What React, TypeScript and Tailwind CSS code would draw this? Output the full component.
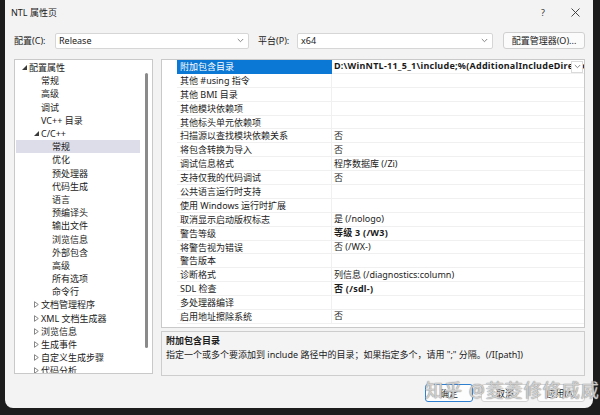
import React from "react";

type TreeItem = { label: string; level: 0 | 1 | 2; kind: "open" | "closed" | "leaf"; selected?: boolean };

const tree: TreeItem[] = [
  { label: "配置属性", level: 0, kind: "open" },
  { label: "常规", level: 1, kind: "leaf" },
  { label: "高级", level: 1, kind: "leaf" },
  { label: "调试", level: 1, kind: "leaf" },
  { label: "VC++ 目录", level: 1, kind: "leaf" },
  { label: "C/C++", level: 1, kind: "open" },
  { label: "常规", level: 2, kind: "leaf", selected: true },
  { label: "优化", level: 2, kind: "leaf" },
  { label: "预处理器", level: 2, kind: "leaf" },
  { label: "代码生成", level: 2, kind: "leaf" },
  { label: "语言", level: 2, kind: "leaf" },
  { label: "预编译头", level: 2, kind: "leaf" },
  { label: "输出文件", level: 2, kind: "leaf" },
  { label: "浏览信息", level: 2, kind: "leaf" },
  { label: "外部包含", level: 2, kind: "leaf" },
  { label: "高级", level: 2, kind: "leaf" },
  { label: "所有选项", level: 2, kind: "leaf" },
  { label: "命令行", level: 2, kind: "leaf" },
  { label: "文档管理程序", level: 1, kind: "closed" },
  { label: "XML 文档生成器", level: 1, kind: "closed" },
  { label: "浏览信息", level: 1, kind: "closed" },
  { label: "生成事件", level: 1, kind: "closed" },
  { label: "自定义生成步骤", level: 1, kind: "closed" },
  { label: "代码分析", level: 1, kind: "closed" },
];

type Prop = { name: string; value?: string; bold?: boolean };

const props: Prop[] = [
  { name: "附加包含目录", value: "D:\\WinNTL-11_5_1\\include;%(AdditionalIncludeDirectories)", bold: true },
  { name: "其他 #using 指令" },
  { name: "其他 BMI 目录" },
  { name: "其他模块依赖项" },
  { name: "其他标头单元依赖项" },
  { name: "扫描源以查找模块依赖关系", value: "否" },
  { name: "将包含转换为导入", value: "否" },
  { name: "调试信息格式", value: "程序数据库 (/Zi)" },
  { name: "支持仅我的代码调试", value: "否" },
  { name: "公共语言运行时支持" },
  { name: "使用 Windows 运行时扩展" },
  { name: "取消显示启动版权标志", value: "是 (/nologo)" },
  { name: "警告等级", value: "等级 3 (/W3)", bold: true },
  { name: "将警告视为错误", value: "否 (/WX-)" },
  { name: "警告版本" },
  { name: "诊断格式", value: "列信息 (/diagnostics:column)" },
  { name: "SDL 检查", value: "否 (/sdl-)", bold: true },
  { name: "多处理器编译" },
  { name: "启用地址擦除系统", value: "否" },
];

const levelPad: Record<number, string> = {
  0: "pl-[6px]",
  1: "pl-[18px]",
  2: "pl-[29px]",
};

function Chevron() {
  return (
    <svg width="7" height="5" viewBox="0 0 7 5" className="shrink-0">
      <path d="M0.8 1 L3.5 3.7 L6.2 1" fill="none" stroke="#7a7a7a" strokeWidth="0.9" />
    </svg>
  );
}

function Combo({ text, w }: { text: string; w: string }) {
  return (
    <div className={`${w} shrink-0 h-[16px] bg-white border border-[#d6d6d6] rounded-[2px] flex items-center justify-between pl-[3px] pr-[4px]`}>
      <span>{text}</span>
      <Chevron />
    </div>
  );
}

function Arrow({ kind }: { kind: "open" | "closed" }) {
  if (kind === "open")
    return (
      <svg width="5" height="5" viewBox="0 0 5 5" className="shrink-0">
        <path d="M5 0 L5 5 L0 5 Z" fill="#3a3a3a" />
      </svg>
    );
  return (
    <svg width="5" height="7" viewBox="0 0 5 7" className="shrink-0">
      <path d="M0.5 0.7 L4.3 3.5 L0.5 6.3 Z" fill="none" stroke="#6a6a6a" strokeWidth="0.8" />
    </svg>
  );
}

function Button({ text, primary }: { text: string; primary?: boolean }) {
  return (
    <div
      className={`w-[48px] h-[18px] rounded-[3px] flex items-center justify-center bg-[#fdfdfd] border ${
        primary ? "border-[#2f7fd0]" : "border-[#d2d2d2]"
      }`}
    >
      {text}
    </div>
  );
}

export default function App() {
  return (
    <div className="w-[600px] h-[415px] bg-[#1c1c1c] flex overflow-hidden font-['Noto_Sans','Noto_Sans_CJK_SC',sans-serif] text-[9px] leading-none text-[#1b1b1b]">
      <div className="relative ml-[5px] w-[588px] h-[408px] bg-[#f3f3f3] rounded-b-[8px] flex flex-col">
        {/* Title bar */}
        <div className="h-[24px] flex items-center justify-between pl-[6px] pr-[13px]">
          <span className="pt-[1px]">NTL 属性页</span>
          <div className="flex items-center gap-[26px]">
            <span className="text-[#333]">?</span>
            <svg width="9" height="9" viewBox="0 0 9 9">
              <path d="M0.5 0.5 L8.5 8.5 M8.5 0.5 L0.5 8.5" stroke="#333" strokeWidth="0.9" />
            </svg>
          </div>
        </div>

        {/* Config row */}
        <div className="mt-[8px] h-[17px] flex items-center pl-[9px]">
          <span className="w-[41px] shrink-0">配置(C):</span>
          <Combo text="Release" w="w-[194px]" />
          <span className="ml-[9px] w-[39px] shrink-0">平台(P):</span>
          <Combo text="x64" w="w-[196px]" />
          <div className="ml-[10px] w-[82px] shrink-0 h-[17px] bg-[#fbfbfb] border border-[#d0d0d0] rounded-[3px] flex items-center justify-center">
            配置管理器(O)...
          </div>
        </div>

        {/* Main */}
        <div className="mt-[10px] flex pl-[9px] pr-[8px] gap-[8px]">
          {/* Tree */}
          <div className="w-[139px] shrink-0 h-[315px] bg-white border border-[#c9c9c9] flex overflow-hidden">
            <div className="flex-1 pt-[1px] pl-[1px] flex flex-col">
              {tree.map((t, i) => (
                <div
                  key={i}
                  className={`h-[13.2px] shrink-0 flex items-center ${levelPad[t.level]} ${
                    t.selected ? "bg-[#dcdde8]" : ""
                  }`}
                >
                  <span className="w-[7px] shrink-0 flex items-center">
                    {t.kind !== "leaf" ? <Arrow kind={t.kind} /> : null}
                  </span>
                  <span className="whitespace-nowrap">{t.label}</span>
                </div>
              ))}
            </div>
            <div className="w-[12px] shrink-0 flex justify-center pt-[13px]">
              <div className="w-[3px] h-[275px] bg-[#8a8a8a] rounded-full" />
            </div>
          </div>

          {/* Right */}
          <div className="flex-1 min-w-0 flex flex-col gap-[3px]">
            <div className="h-[269px] bg-white border border-[#c9c9c9] flex flex-col overflow-hidden">
              {props.map((p, i) => (
                <div key={i} className="h-[13.9px] shrink-0 flex">
                  <div className="w-[15px] shrink-0" />
                  <div
                    className={`w-[155px] shrink-0 flex items-center pl-[3px] border-b border-r whitespace-nowrap ${
                      i === 0 ? "bg-[#0a78d4] text-white border-[#0a78d4]" : "border-[#f0f0f0]"
                    }`}
                  >
                    {p.name}
                  </div>
                  <div className="flex-1 min-w-0 flex items-center border-b border-[#f0f0f0] relative overflow-hidden">
                    <span
                      className={`pl-[2px] whitespace-nowrap leading-[12px] ${
                        p.bold ? "font-bold tracking-[0.25px]" : ""
                      }`}
                    >
                      {p.value ?? ""}
                    </span>
                    {i === 0 && (
                      <div className="absolute right-[1px] top-[0.5px] w-[12px] h-[12px] bg-white border border-[#dadada] flex items-center justify-center">
                        <Chevron />
                      </div>
                    )}
                  </div>
                </div>
              ))}
            </div>
            <div className="h-[45px] border border-[#cdcdcd] bg-[#f4f4f4] pl-[4px] pt-[4px] flex flex-col gap-[5px]">
              <span className="font-bold">附加包含目录</span>
              <span className="whitespace-nowrap">指定一个或多个要添加到 include 路径中的目录；如果指定多个，请用 ";" 分隔。(/I[path])</span>
            </div>
          </div>
        </div>

        {/* Buttons */}
        <div className="mt-[8px] flex justify-end gap-[8px] pr-[8px]">
          <Button text="确定" primary />
          <Button text="取消" />
          <Button text="应用(A)" />
        </div>

        {/* Watermark */}
        <div className="absolute left-[420px] top-[381px] text-[18px] leading-none text-white/60 [text-shadow:0_0_1px_#888,0_0_1px_#888] tracking-[1px] whitespace-nowrap pointer-events-none">
          知乎 @菱菱修修威威
        </div>
      </div>
    </div>
  );
}
